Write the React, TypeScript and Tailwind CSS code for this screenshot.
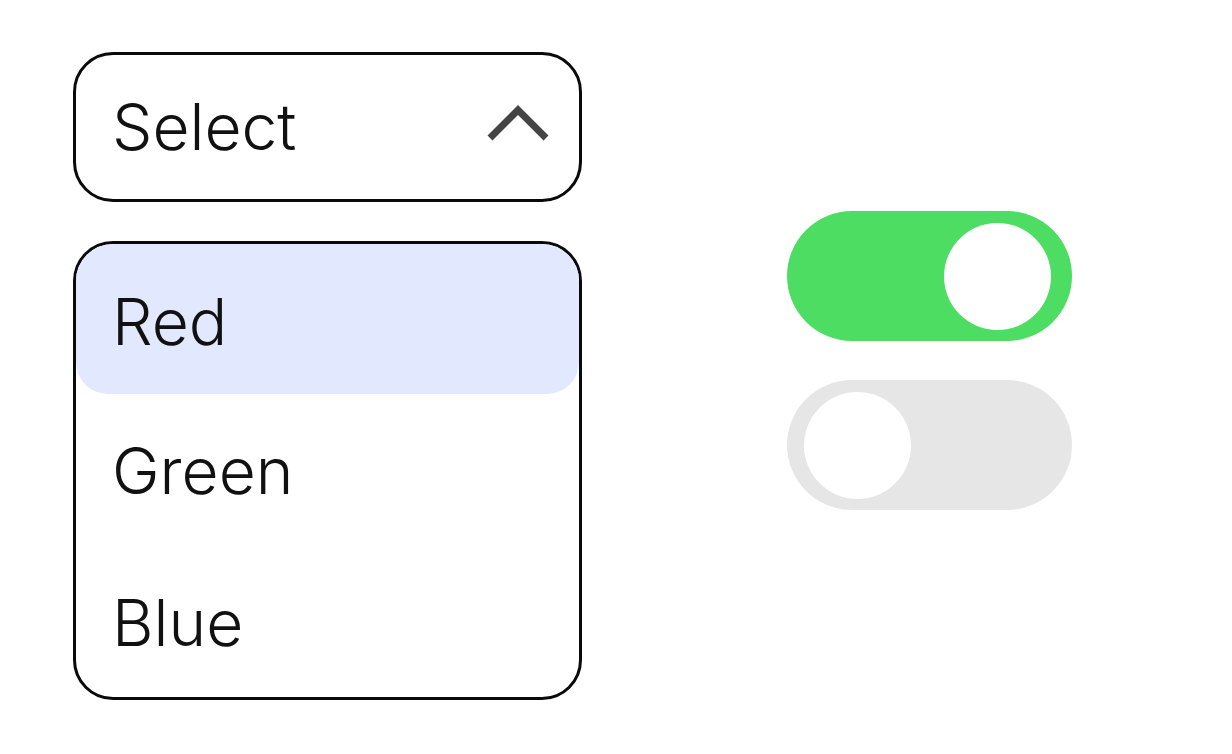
import React from "react";

function Toggle({ on }: { on: boolean }) {
  return (
    <div
      className={
        on
          ? "w-[285px] h-[130px] rounded-full bg-[#4cdd62] flex items-center justify-end px-[21px]"
          : "w-[285px] h-[130px] rounded-full bg-[#e6e6e6] flex items-center justify-start px-[17px]"
      }
    >
      <div className="w-[107px] h-[107px] rounded-full bg-white" />
    </div>
  );
}

export default function App() {
  return (
    <div
      className="w-[1232px] h-[754px] bg-white flex pt-[52px] pl-[73px] text-[#111111]"
      style={{ fontFamily: "Inter, 'Noto Sans', sans-serif" }}
    >
      <div className="w-[509px] flex flex-col gap-[39px]">
        <div className="h-[150px] border-[3px] border-[#0a0a0a] rounded-[40px] flex items-center justify-between pl-[36px] pr-[29px]">
          <span className="text-[64px] leading-none font-light">Select</span>
          <svg width="64" height="40" viewBox="0 0 64 40" className="mt-[-4px]">
            <path d="M4 33 L32 5 L60 33" fill="none" stroke="#444444" strokeWidth="7" strokeLinejoin="miter" />
          </svg>
        </div>
        <div className="h-[459px] border-[3px] border-[#0a0a0a] rounded-[40px] overflow-hidden flex flex-col">
          <div className="h-[150px] bg-[#e2e8fd] rounded-b-[32px] flex items-center pl-[36px] pt-[6px]">
            <span className="text-[64px] leading-none font-light">Red</span>
          </div>
          <div className="h-[151px] flex items-center pl-[36px] pt-[2px]">
            <span className="text-[64px] leading-none font-light">Green</span>
          </div>
          <div className="h-[152px] flex items-center pl-[36px] pt-[4px]">
            <span className="text-[64px] leading-none font-light">Blue</span>
          </div>
        </div>
      </div>
      <div className="ml-[205px] mt-[159px] flex flex-col gap-[39px]">
        <Toggle on={true} />
        <Toggle on={false} />
      </div>
    </div>
  );
}
